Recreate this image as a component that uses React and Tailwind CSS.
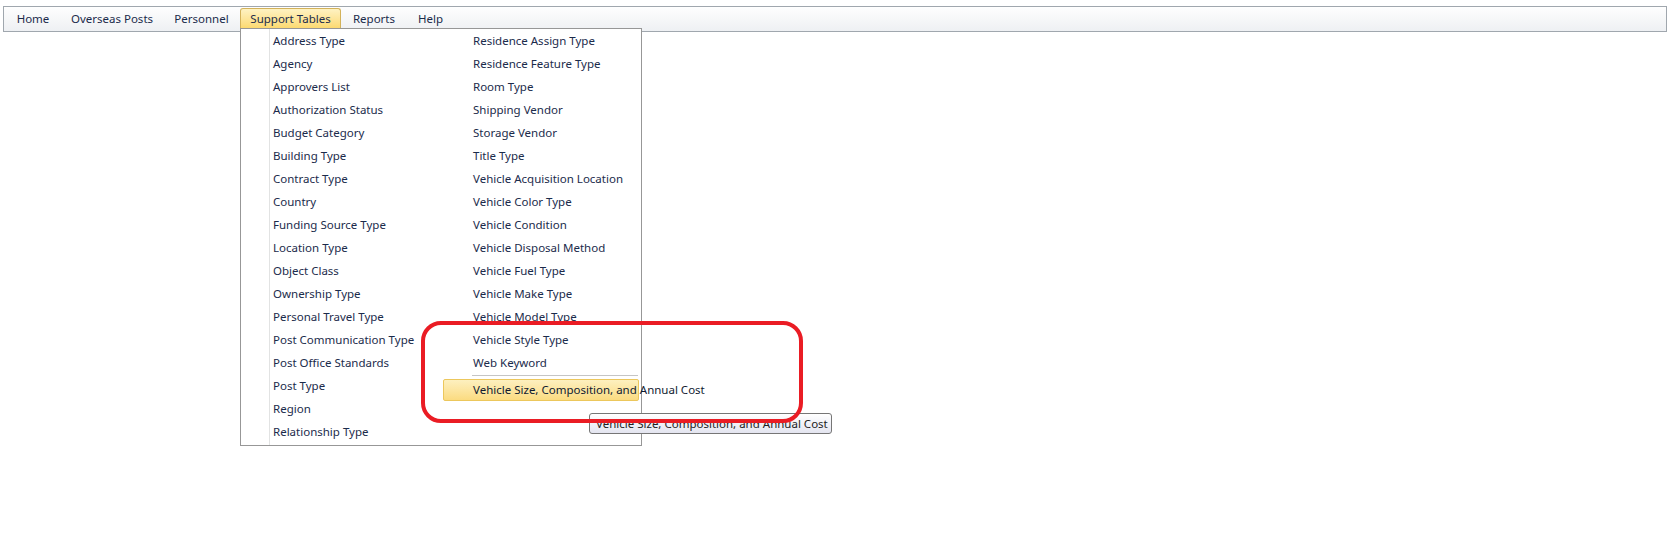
import { useState } from "react";

const topItems = [
  { label: "Home", w: "w-[56px]" },
  { label: "Overseas Posts", w: "w-[102px]" },
  { label: "Personnel", w: "w-[77px]" },
  { label: "Support Tables", w: "w-[101px]", open: true },
  { label: "Reports", w: "w-[66px]" },
  { label: "Help", w: "w-[47px]" },
];

const leftColumn = [
  "Address Type",
  "Agency",
  "Approvers List",
  "Authorization Status",
  "Budget Category",
  "Building Type",
  "Contract Type",
  "Country",
  "Funding Source Type",
  "Location Type",
  "Object Class",
  "Ownership Type",
  "Personal Travel Type",
  "Post Communication Type",
  "Post Office Standards",
  "Post Type",
  "Region",
  "Relationship Type",
];

const rightColumn = [
  "Residence Assign Type",
  "Residence Feature Type",
  "Room Type",
  "Shipping Vendor",
  "Storage Vendor",
  "Title Type",
  "Vehicle Acquisition Location",
  "Vehicle Color Type",
  "Vehicle Condition",
  "Vehicle Disposal Method",
  "Vehicle Fuel Type",
  "Vehicle Make Type",
  "Vehicle Model Type",
  "Vehicle Style Type",
  "Web Keyword",
];

function MenuItem({ label }) {
  return (
    <div className="h-[23px] flex items-center pl-[32px] pb-[1px] whitespace-nowrap">
      {label}
    </div>
  );
}

function App() {
  const [active] = useState("Vehicle Size, Composition, and Annual Cost");

  return (
    <div className="relative min-h-[537px] bg-white text-[11.5px] text-[#1b2b4b] font-['Segoe_UI','Noto_Sans',sans-serif]">
      <div className="pt-[6px] pl-[3px] pr-[5px]">
        <div className="h-[26px] border border-[#a0a7ae] bg-gradient-to-b from-[#fefefe] to-[#eef0f3] flex pl-[1px]">
          {topItems.map((item) =>
            item.open ? (
              <div
                key={item.label}
                className={`${item.w} mt-[1px] h-[22px] flex items-center justify-center pb-[1px] border border-b-0 border-[#d3b25a] rounded-t-[3px] bg-gradient-to-b from-[#fef2c2] to-[#fcd766] whitespace-nowrap`}
              >
                {item.label}
              </div>
            ) : (
              <div
                key={item.label}
                className={`${item.w} mt-[1px] h-[21px] flex items-center justify-center whitespace-nowrap`}
              >
                {item.label}
              </div>
            )
          )}
        </div>
      </div>

      {/* dropdown */}
      <div className="absolute left-[240px] top-[28px] w-[402px] h-[418px] border border-[#979797] bg-white">
        <div className="absolute left-[28px] top-0 bottom-0 w-[1px] bg-[#e2e3e3]" />
        <div className="relative flex pt-[1px]">
          <div className="w-[200px]">
            {leftColumn.map((l) => (
              <MenuItem key={l} label={l} />
            ))}
          </div>
          <div className="w-[200px]">
            {rightColumn.map((l) => (
              <MenuItem key={l} label={l} />
            ))}
            <div className="ml-[31px] mr-[3px] h-[1px] bg-[#c5c5c5]" />
            <div className="mt-[3px] mx-[2px] h-[22px] flex items-center pl-[30px] pb-[1px] whitespace-nowrap border border-[#ecc75c] rounded-[2px] bg-gradient-to-b from-[#fdf0bf] to-[#fbdb80] text-[#101a30]">
              <span className="-ml-[1px]">{active}</span>
            </div>
          </div>
        </div>
      </div>

      {/* tooltip */}
      <div className="absolute left-[589px] top-[413px] w-[243px] h-[21px] border border-[#767676] rounded-[3px] bg-gradient-to-b from-white to-[#e4e5f0] flex items-center pl-[6px] whitespace-nowrap text-[#222]">
        {active}
      </div>

      {/* annotation */}
      <div className="absolute left-[421px] top-[321px] w-[382px] h-[102px] border-[4px] border-[#ea1c24] rounded-[20px]" />
    </div>
  );
}

export default App;
